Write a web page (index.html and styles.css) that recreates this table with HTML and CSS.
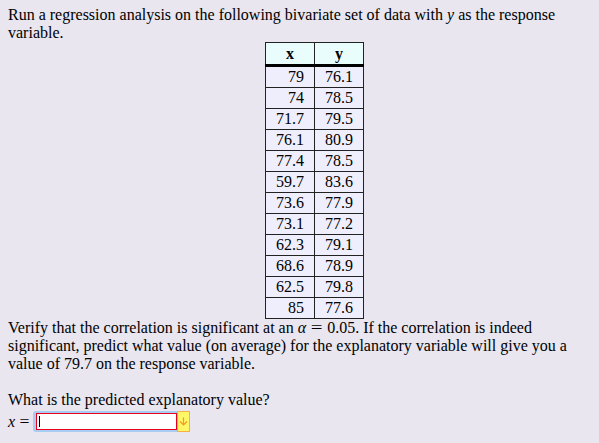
FILE: index.html
```html
<!DOCTYPE html>
<html>
<head>
<meta charset="utf-8">
<link rel="stylesheet" href="styles.css">
</head>
<body>
<div class="question">
  <p class="text">Run a regression analysis on the following bivariate set of data with <i>y</i> as the response variable.</p>
  <table class="data">
    <thead>
      <tr><th>x</th><th>y</th></tr>
    </thead>
    <tbody>
      <tr><td>79</td><td>76.1</td></tr>
      <tr><td>74</td><td>78.5</td></tr>
      <tr><td>71.7</td><td>79.5</td></tr>
      <tr><td>76.1</td><td>80.9</td></tr>
      <tr><td>77.4</td><td>78.5</td></tr>
      <tr><td>59.7</td><td>83.6</td></tr>
      <tr><td>73.6</td><td>77.9</td></tr>
      <tr><td>73.1</td><td>77.2</td></tr>
      <tr><td>62.3</td><td>79.1</td></tr>
      <tr><td>68.6</td><td>78.9</td></tr>
      <tr><td>62.5</td><td>79.8</td></tr>
      <tr><td>85</td><td>77.6</td></tr>
    </tbody>
  </table>
  <p class="text">Verify that the correlation is significant at an <span class="math"><i>α</i><span class="eq">=</span>0.05</span>. If the correlation is indeed significant, predict what value (on average) for the explanatory variable will give you a value of 79.7 on the response variable.</p>
  <p class="text gap">What is the predicted explanatory value?</p>
  <div class="answer">
    <span class="label"><i>x</i><span class="eq small">=</span></span>
    <span class="field">
      <span class="input"><span class="caret"></span></span>
      <span class="drop"><svg width="9" height="9" viewBox="0 0 9 9"><path d="M4.5 0.5 V8 M1 4.5 L4.5 8 L8 4.5" fill="none" stroke="#f29a2a" stroke-width="1.2"/></svg></span>
    </span>
  </div>
</div>
</body>
</html>
```

FILE: styles.css
```css
html, body {
  margin: 0;
  padding: 0;
  background: #e9e6f0;
}
body {
  padding: 6px 8px 0 8px;
  font-family: "Liberation Serif", "Times New Roman", serif;
  font-size: 16px;
  line-height: 18px;
  color: #000;
}
.text {
  margin: 0;
}
.gap {
  margin-top: 18px;
}
.data {
  border-collapse: collapse;
  margin-left: 257px;
  background: #efeefc;
}
.data th, .data td {
  border: 1px solid #222;
  padding: 0 10px 0 6px;
  width: 32px;
  text-align: right;
  line-height: 20px;
}
.data th {
  background: #e9fdfd;
  text-align: center;
  font-weight: bold;
  line-height: 21px;
  border-bottom: 3px solid #000;
  padding: 0;
}
.math .eq {
  display: inline-block;
  margin: 0 6px 0 6px;
  transform: scaleX(1.3);
}
.label .eq {
  display: inline-block;
  margin-left: 5px;
  transform: scaleX(1.1);
}
.answer {
  display: flex;
  align-items: center;
  height: 23px;
  margin-top: 1px;
}
.label {
  display: inline-block;
  width: 25px;
}
.field {
  display: flex;
  align-items: stretch;
  padding: 2px 2px 2px 3px;
  background: #a9cdf2;
  border-radius: 3px;
  height: 17px;
}
.input {
  width: 141px;
  background: #fff;
  border: 1px solid #e8001c;
  box-sizing: border-box;
  position: relative;
}
.caret {
  position: absolute;
  left: 2px;
  top: 2px;
  width: 1px;
  height: 11px;
  background: #000;
}
.drop {
  width: 11px;
  margin: -2px -2px -2px 0;
  background: #fff766;
  border: 1px solid #f5b04a;
  display: flex;
  align-items: center;
  justify-content: center;
}
```
